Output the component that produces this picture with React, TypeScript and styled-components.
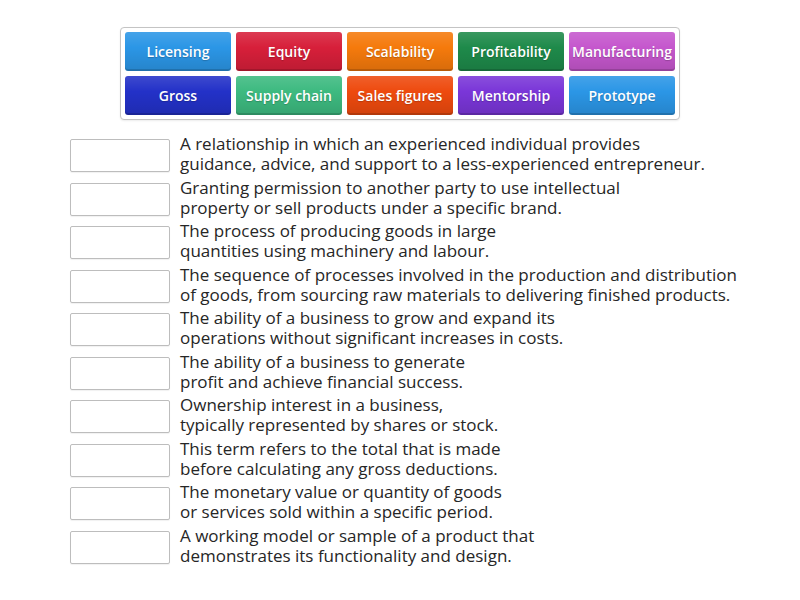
import styled, { createGlobalStyle } from "styled-components";

const GlobalStyle = createGlobalStyle`
  html, body {
    margin: 0;
    padding: 0;
    background: #ffffff;
  }
  body {
    font-family: "Open Sans", "Liberation Sans", sans-serif;
  }
`;

interface Tile {
  label: string;
  color: string;
}

const tiles: Tile[] = [
  { label: "Licensing", color: "#2b96e6" },
  { label: "Equity", color: "#d71f3a" },
  { label: "Scalability", color: "#f57a0c" },
  { label: "Profitability", color: "#1e8a4a" },
  { label: "Manufacturing", color: "#c557cd" },
  { label: "Gross", color: "#2331c8" },
  { label: "Supply chain", color: "#3dba80" },
  { label: "Sales figures", color: "#ee4a0e" },
  { label: "Mentorship", color: "#7a36d8" },
  { label: "Prototype", color: "#2b96e6" },
];

const definitions: string[][] = [
  [
    "A relationship in which an experienced individual provides",
    "guidance, advice, and support to a less-experienced entrepreneur.",
  ],
  [
    "Granting permission to another party to use intellectual",
    "property or sell products under a specific brand.",
  ],
  ["The process of producing goods in large", "quantities using machinery and labour."],
  [
    "The sequence of processes involved in the production and distribution",
    "of goods, from sourcing raw materials to delivering finished products.",
  ],
  [
    "The ability of a business to grow and expand its",
    "operations without significant increases in costs.",
  ],
  ["The ability of a business to generate", "profit and achieve financial success."],
  ["Ownership interest in a business,", "typically represented by shares or stock."],
  [
    "This term refers to the total that is made",
    "before calculating any gross deductions.",
  ],
  [
    "The monetary value or quantity of goods",
    "or services sold within a specific period.",
  ],
  [
    "A working model or sample of a product that",
    "demonstrates its functionality and design.",
  ],
];

const App = () => (
  <Page>
    <GlobalStyle />
    <TileBank>
      {tiles.map((t) => (
        <TileButton key={t.label} $color={t.color}>
          {t.label}
        </TileButton>
      ))}
    </TileBank>
    <List>
      {definitions.map((lines, i) => (
        <Row key={i}>
          <DropBox />
          <Definition>
            {lines.map((line) => (
              <Line key={line}>{line}</Line>
            ))}
          </Definition>
        </Row>
      ))}
    </List>
  </Page>
);

const Page = styled.div`
  width: 800px;
  height: 600px;
  padding-top: 27px;
  box-sizing: border-box;
  display: flex;
  flex-direction: column;
  align-items: center;
`;

const TileBank = styled.div`
  display: grid;
  grid-template-columns: repeat(5, 106px);
  grid-auto-rows: 39px;
  gap: 5px;
  padding: 4px;
  border: 1px solid #c4c4c4;
  border-radius: 4px;
  background: #fff;
  box-shadow: 0 1px 2px rgba(0, 0, 0, 0.08);
`;

const TileButton = styled.div<{ $color: string }>`
  display: flex;
  align-items: center;
  justify-content: center;
  padding-bottom: 1px;
  border-radius: 3px;
  background: ${({ $color }) => $color};
  background-image: linear-gradient(
    rgba(255, 255, 255, 0.12),
    rgba(255, 255, 255, 0) 40%,
    rgba(0, 0, 0, 0.12)
  );
  box-shadow: inset 0 -2px 0 rgba(0, 0, 0, 0.15);
  color: #fff;
  font-weight: 600;
  font-size: 14px;
  text-shadow: 0 1px 1px rgba(0, 0, 0, 0.2);
  white-space: nowrap;
`;

const List = styled.div`
  align-self: stretch;
  display: flex;
  flex-direction: column;
  gap: 3.5px;
  padding: 14px 0 0 70px;
`;

const Row = styled.div`
  display: flex;
  align-items: flex-start;
  gap: 10px;
`;

const DropBox = styled.div`
  flex: none;
  width: 100px;
  height: 33px;
  margin-top: 5px;
  box-sizing: border-box;
  border: 1px solid #bdbdbd;
  border-radius: 2px;
  background: #fff;
  box-shadow: 0 1px 1px rgba(0, 0, 0, 0.06);
`;

const Definition = styled.div`
  display: flex;
  flex-direction: column;
  font-size: 17px;
  color: #262626;
`;

const Line = styled.span`
  display: block;
  height: 20px;
  line-height: 20px;
  white-space: nowrap;
`;

export default App;
